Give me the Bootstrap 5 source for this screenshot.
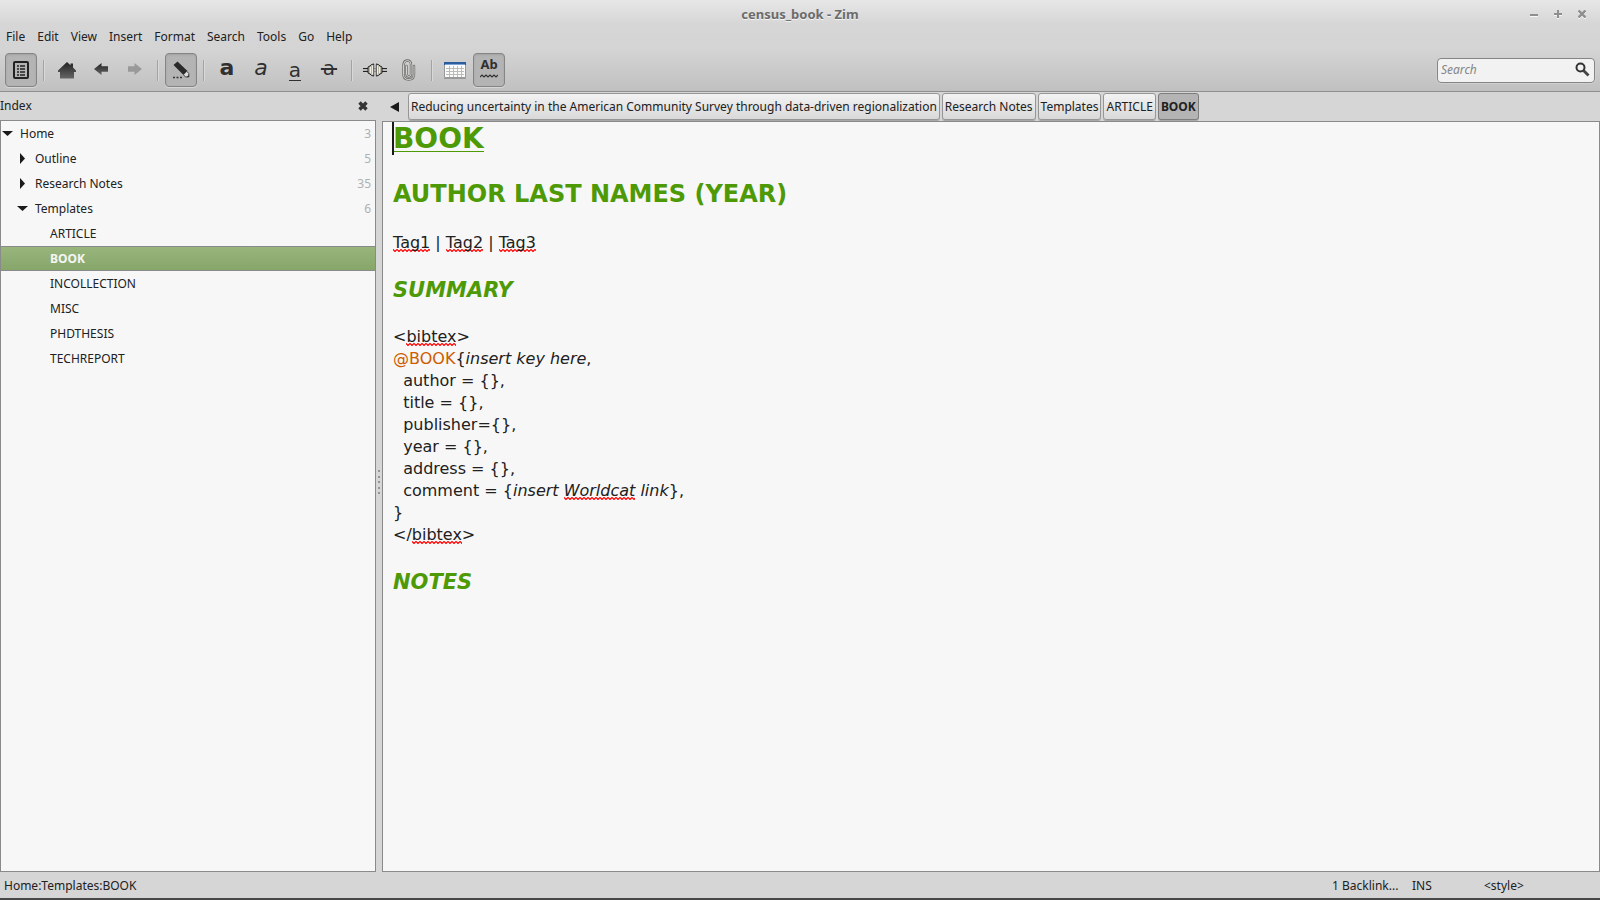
<!DOCTYPE html>
<html lang="en">
<head>
<meta charset="utf-8">
<meta name="viewport" content="width=device-width, initial-scale=1">
<title>census_book - Zim</title>
<link href="https://cdn.jsdelivr.net/npm/bootstrap@5.3.0/dist/css/bootstrap.min.css" rel="stylesheet">
<style>
  body { background: #d6d6d6; color: #212121; font: 12px/18px "Noto Sans", "Open Sans", sans-serif; }
  .app-head { background: linear-gradient(#e7e7e7, #d6d6d6 24px, #d4d4d4 50px, #c0c0c0); border-bottom: 1px solid #8f8f8f; }
  .title-bar { height: 28px; }
  .title-bar h1 { font-size: 13px; line-height: 18px; font-weight: 700; color: #6b6b6b; text-shadow: 0 1px #f4f4f4; }
  .plain-btn { background: none; border: 1px solid transparent; padding: 0; color: #303030; display: flex; align-items: center; justify-content: center; }
  .win-btn { width: 24px; height: 24px; color: #8f8f8f; filter: drop-shadow(0 1px #f6f6f6); }
  .win-area { right: 6px; top: 2px; }
  .menu-bar { height: 21px; padding: 0 1px 4px 0; }
  .menu-bar .nav-link { padding: 0 6px; color: #212121; line-height: 16px; }
  .tool-bar { height: 42px; padding: 0 5px; gap: 2px; }
  .tool { width: 32px; height: 34px; border-radius: 4px; font: 22px/24px "DejaVu Sans", sans-serif; }
  .tool.pressed { background: #b4b4b4; border-color: #858585; box-shadow: 0 1px #d6d6d6, inset 0 1px 2px #a2a2a2; }
  .tool-sep { width: 10px; height: 21px; padding-left: 4px; }
  .tool-sep::before { content: ""; display: block; width: 2px; height: 100%; background: #a3a3a3; border-right: 1px solid #d9d9d9; }
  .fmt { padding-bottom: 4px; }
  .fmt-small { font-size: 20px; }
  .fmt-u { border-bottom: 1px solid #303030; line-height: 20px; margin-top: 4px; }
  .tool.ab { font: 700 13px/12px "Noto Sans", sans-serif; }
  .search-box { width: 158px; height: 25px; border: 1px solid #858585; border-radius: 4px; background: #f2f2f2; box-shadow: 0 0 0 1px #cfcfcf; padding: 0 3px; }
  .search-box input { border: 0; background: none; outline: 0; font-style: italic; font-size: 12px; line-height: 18px; padding: 0; width: 100%; min-width: 0; }
  .search-box input::placeholder { color: #858585; opacity: 1; }
  .side { width: 376px; }
  .side-head { height: 28px; padding-right: 6px; }
  .pane { background: #f7f7f7; border: 1px solid #8a8a8a; }
  .splitter { width: 6px; }
  .tree-row { height: 25px; padding-right: 4px; color: #212121; text-decoration: none; border: 1px solid transparent; border-width: 1px 0; }
  .tree-row svg, .tree-gap { width: 15px; height: 15px; flex: none; margin-right: 4px; }
  .level-1 { padding-left: 15px; }
  .level-2 { padding-left: 30px; }
  .tree-row .count { color: #b0b0b0; }
  .tree-row.current { background: linear-gradient(#98b67c, #87a66a); border-color: #8a8a8a; color: #f5f5f5; font-weight: 700; }
  .path-bar { height: 29px; padding: 1px 0 1px 3px; gap: 2px; }
  .path-bar .back { width: 21px; padding-right: 2px; }
  .crumb { height: 27px; padding: 0 2px; border: 1px solid #969696; border-radius: 3px; background: linear-gradient(#f3f3f3, #d9d9d9); color: #212121; white-space: nowrap; box-shadow: 0 1px #a8a8a8; }
  .crumb.current { background: #b4b4b4; border-color: #7d7d7d; font-weight: 700; }
  .page { font: 16px/19px "DejaVu Sans", sans-serif; padding-left: 10px; overflow: auto; }
  .page p, .page h2, .page h3, .page h4 { margin: 0 0 22px; color: #212121; }
  .page h2, .page h3, .page h4 { color: #4e9a06; font-weight: 700; padding-bottom: 3px; }
  .page h2 { font-size: 28px; line-height: 33px; }
  .page h3 { font-size: 24px; line-height: 28px; }
  .page h4 { font-size: 21px; line-height: 27px; font-style: italic; padding-bottom: 1px; }
  .page h2 span { display: inline-block; height: 30px; border-bottom: 1px solid #4e9a06; vertical-align: top; }
  .caret { position: absolute; left: -1px; top: 0; width: 2px; height: 33px; background: #1a1a1a; }
  .page p span.d-block { line-height: 19px; padding-bottom: 3px; white-space: pre; }
  .tag { color: #ce5c00; }
  .typo { background: url("data:image/svg+xml,%3Csvg xmlns='http://www.w3.org/2000/svg' width='4' height='3'%3E%3Cpath d='M-1 1.500L0 .5L2 2.500L4 .5L5 1.500' fill='none' stroke='%23f00' stroke-width='1.200'/%3E%3C/svg%3E") left bottom repeat-x; }
  .status-bar { height: 28px; border-bottom: 2px solid #484848; padding: 1px 0 0 4px; }
  .status-links { width: 80px; }
  .status-mode { width: 72px; }
  .status-style { width: 116px; }
</style>
</head>
<body class="vh-100 d-flex flex-column overflow-hidden">
<header class="app-head">
  <div class="title-bar position-relative d-flex align-items-center justify-content-center">
    <h1 class="m-0">census_book - Zim</h1>
    <div class="win-area position-absolute d-flex">
      <button class="plain-btn win-btn" aria-label="Minimize"><svg width="8" height="8"><path d="M0 4h8v2H0z" fill="currentColor"/></svg></button>
      <button class="plain-btn win-btn" aria-label="Maximize"><svg width="8" height="8"><path d="M3 0h2v3h3v2H5v3H3V5H0V3h3z" fill="currentColor"/></svg></button>
      <button class="plain-btn win-btn" aria-label="Close"><svg width="8" height="8"><path d="M.5 .5l7 7M7.500 .5l-7 7" stroke="currentColor" stroke-width="2.400"/></svg></button>
    </div>
  </div>
  <nav class="menu-bar nav align-items-center" aria-label="Menu">
    <a class="nav-link" href="#">File</a><a class="nav-link" href="#">Edit</a><a class="nav-link" href="#">View</a><a class="nav-link" href="#">Insert</a><a class="nav-link" href="#">Format</a><a class="nav-link" href="#">Search</a><a class="nav-link" href="#">Tools</a><a class="nav-link" href="#">Go</a><a class="nav-link" href="#">Help</a>
  </nav>
  <div class="tool-bar d-flex align-items-center" role="toolbar">
    <button class="plain-btn tool pressed" aria-label="Index"><svg width="16" height="18"><rect x="1" y="1" width="14" height="16" rx="1" fill="none" stroke="#222" stroke-width="2"/><path d="M4 5h2M4 8h2M4 11h2M4 14h2M7 5h5M7 8h5M7 11h5M7 14h5" stroke="#222" stroke-width="1.300"/></svg></button>
    <span class="tool-sep"></span>
    <button class="plain-btn tool" aria-label="Home"><svg width="18" height="17"><defs><linearGradient id="dk" x2="0" y2="1"><stop stop-color="#222"/><stop offset="1" stop-color="#666"/></linearGradient></defs><path d="M9 0l3.500 3.200V1.500H15v4L18 8.500V10h-2v6.500H2V10H0V8.500z" fill="url(#dk)"/></svg></button>
    <button class="plain-btn tool" aria-label="Back"><svg width="14" height="16"><path d="M0 7L7.500 1v3.200H14v5.600H7.500V13z" fill="url(#dk)"/></svg></button>
    <button class="plain-btn tool" aria-label="Forward"><svg width="14" height="16"><path d="M14 7L6.500 1v3.200H0v5.600h6.500V13z" fill="#999"/></svg></button>
    <span class="tool-sep"></span>
    <button class="plain-btn tool pressed" aria-label="Edit"><svg width="18" height="18"><path d="M1.500 4L5.500 .5l10 9.500-4 4z" fill="#2a2a2a"/><path d="M15 10.500L16.800 12.500V16H13.500L11.700 14" fill="#ddd" stroke="#444"/><path d="M14.500 16L17 13.800V16z" fill="#333"/><path d="M1 16.500h2M4.500 16.500h2M8 16.500h2" stroke="#333" stroke-width="1.500"/></svg></button>
    <span class="tool-sep"></span>
    <button class="plain-btn tool fmt fw-bold" aria-label="Strong">a</button>
    <button class="plain-btn tool fmt fst-italic" aria-label="Emphasis">a</button>
    <button class="plain-btn tool fmt fmt-small" aria-label="Mark"><span class="fmt-u">a</span></button>
    <button class="plain-btn tool fmt fmt-small" aria-label="Strike"><s>&#8202;a&#8202;</s></button>
    <span class="tool-sep"></span>
    <button class="plain-btn tool" aria-label="Insert link"><svg width="24" height="14"><path d="M0 7h24" stroke="#222" stroke-width="4"/><path d="M0 7h24" stroke="#eee" stroke-width="1.500"/><path d="M11 1Q8 1 7 3L5 4v6l2 1q1 2 4 2z" fill="#b5b3a6" stroke="#222"/><path d="M13 1q3 0 4 2l2 1v6l-2 1q-1 2-4 2z" fill="#b5b3a6" stroke="#222"/><path d="M7.500 4v6M16.500 4v6M9.500 2.500v9M14.500 2.500v9" stroke="#eeeee6"/><path d="M12 1v12" stroke="#eee"/></svg></button>
    <button class="plain-btn tool" aria-label="Attach file"><svg width="14" height="22"><g fill="none" stroke-linecap="round"><path d="M4.500 7v8q0 2.500 2.300 2.500T9 15V5.500Q9 1.500 5.500 1.500T1.500 5.500v10q0 5 5.200 5t5.300-5V7" stroke="#6c6c68" stroke-width="2.400"/><path d="M4.500 7v8q0 2.500 2.300 2.500T9 15V5.500Q9 1.500 5.500 1.500T1.500 5.500v10q0 5 5.200 5t5.300-5V7" stroke="#ddd" stroke-width=".9"/></g></svg></button>
    <span class="tool-sep"></span>
    <button class="plain-btn tool" aria-label="Insert table"><svg width="24" height="20"><path d="M1 18.500h22" stroke="#999"/><path d="M1.500 2.500h21v15h-21z" fill="#fafaf8" stroke="#999"/><path d="M1 2h22v3H1z" fill="#2d5c9e"/><path d="M2 4.500h20" stroke="#7da3d4"/><path d="M3 8.500h18M3 11.500h18M3 14.500h18M6.500 6v11M10.500 6v11M14.500 6v11M18.500 6v11" stroke="#bbb"/></svg></button>
    <button class="plain-btn tool pressed ab flex-column pb-1" aria-label="Check spelling"><span>Ab</span><svg class="mt-1" width="18" height="4"><path d="M0 3l2-2 2 2 2-2 2 2 2-2 2 2 2-2 2 2 2-2" fill="none" stroke="#303030" stroke-width="1.200"/></svg></button>
    <div class="search-box d-flex align-items-center ms-auto">
      <input type="text" placeholder="Search" aria-label="Search">
      <button class="plain-btn" aria-label="Find"><svg width="16" height="16"><circle cx="6.500" cy="5.500" r="4" fill="none" stroke="#333" stroke-width="2"/><path d="M9.500 8.500l5 5" stroke="#444" stroke-width="2.800"/></svg></button>
    </div>
  </div>
</header>

<main class="d-flex flex-fill overflow-hidden">
  <aside class="side d-flex flex-column flex-shrink-0">
    <div class="side-head d-flex align-items-center justify-content-between">
      <span>Index</span>
      <button class="plain-btn" aria-label="Close index"><svg width="12" height="12"><path d="M2.500 2.500l7 7M9.500 2.500l-7 7" stroke="#333" stroke-width="3.400"/></svg></button>
    </div>
    <nav class="pane flex-fill" aria-label="Index">
      <a href="#" class="tree-row d-flex align-items-center"><svg><path d="M1 5h11L6.500 10z" fill="#1a1a1a"/></svg>Home<span class="count ms-auto">3</span></a>
      <a href="#" class="tree-row level-1 d-flex align-items-center"><svg><path d="M4 2v11l5-5.500z" fill="#1a1a1a"/></svg>Outline<span class="count ms-auto">5</span></a>
      <a href="#" class="tree-row level-1 d-flex align-items-center"><svg><path d="M4 2v11l5-5.500z" fill="#1a1a1a"/></svg>Research Notes<span class="count ms-auto">35</span></a>
      <a href="#" class="tree-row level-1 d-flex align-items-center"><svg><path d="M1 5h11L6.500 10z" fill="#1a1a1a"/></svg>Templates<span class="count ms-auto">6</span></a>
      <a href="#" class="tree-row level-2 d-flex align-items-center"><span class="tree-gap"></span>ARTICLE</a>
      <a href="#" class="tree-row level-2 current d-flex align-items-center" aria-current="page"><span class="tree-gap"></span>BOOK</a>
      <a href="#" class="tree-row level-2 d-flex align-items-center"><span class="tree-gap"></span>INCOLLECTION</a>
      <a href="#" class="tree-row level-2 d-flex align-items-center"><span class="tree-gap"></span>MISC</a>
      <a href="#" class="tree-row level-2 d-flex align-items-center"><span class="tree-gap"></span>PHDTHESIS</a>
      <a href="#" class="tree-row level-2 d-flex align-items-center"><span class="tree-gap"></span>TECHREPORT</a>
    </nav>
  </aside>
  <div class="splitter d-flex align-items-center justify-content-center flex-shrink-0">
    <svg width="3" height="26"><path d="M0 1h2v2H0zM0 7h2v2H0zM0 12h2v2H0zM0 18h2v2H0zM0 23h2v2H0z" fill="#959595"/></svg>
  </div>
  <section class="d-flex flex-column flex-fill overflow-hidden">
    <div class="path-bar d-flex align-items-center">
      <button class="plain-btn back" aria-label="Scroll path back"><svg width="10" height="12"><path d="M9 1v10L0 6z" fill="#1a1a1a"/></svg></button>
      <button class="crumb">Reducing uncertainty in the American Community Survey through data-driven regionalization</button>
      <button class="crumb">Research Notes</button>
      <button class="crumb">Templates</button>
      <button class="crumb">ARTICLE</button>
      <button class="crumb current">BOOK</button>
    </div>
    <article class="pane page flex-fill">
      <h2 class="position-relative"><i class="caret"></i><span>BOOK</span></h2>
      <h3>AUTHOR LAST NAMES (YEAR)</h3>
      <p><span class="d-block"><span class="typo">Tag1</span> | <span class="typo">Tag2</span> | <span class="typo">Tag3</span></span></p>
      <h4>SUMMARY</h4>
      <p>
        <span class="d-block">&lt;<span class="typo">bibtex</span>&gt;</span>
        <span class="d-block"><span class="tag">@BOOK</span>{<em>insert key here</em>,</span>
        <span class="d-block">  author = {},</span>
        <span class="d-block">  title = {},</span>
        <span class="d-block">  publisher={},</span>
        <span class="d-block">  year = {},</span>
        <span class="d-block">  address = {},</span>
        <span class="d-block">  comment = {<em>insert <span class="typo">Worldcat</span> link</em>},</span>
        <span class="d-block">}</span>
        <span class="d-block">&lt;/<span class="typo">bibtex</span>&gt;</span>
      </p>
      <h4>NOTES</h4>
    </article>
  </section>
</main>

<footer class="status-bar d-flex align-items-center flex-shrink-0">
  <span class="me-auto">Home:Templates:BOOK</span>
  <span class="status-links">1 Backlink...</span>
  <span class="status-mode">INS</span>
  <span class="status-style">&lt;style&gt;</span>
</footer>
<script src="https://cdn.jsdelivr.net/npm/bootstrap@5.3.0/dist/js/bootstrap.bundle.min.js"></script>
</body>
</html>
